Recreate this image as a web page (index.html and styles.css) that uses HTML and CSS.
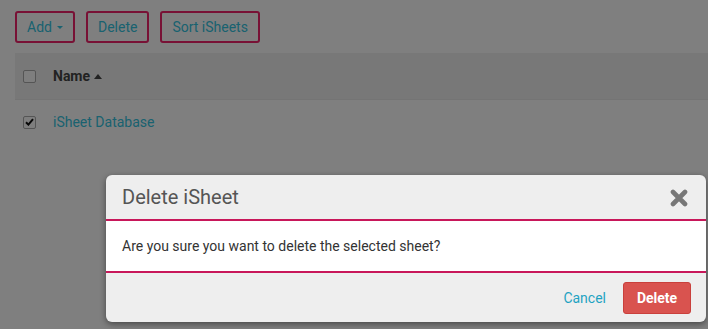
FILE: index.html
```html
<!DOCTYPE html>
<html>
<head>
<meta charset="utf-8">
<link rel="stylesheet" href="styles.css">
</head>
<body>
<div class="page">
  <div class="toolbar">
    <button class="tbtn">Add <span class="caret"></span></button>
    <button class="tbtn">Delete</button>
    <button class="tbtn">Sort iSheets</button>
  </div>
  <div class="table">
    <div class="thead">
      <span class="cb"></span>
      <span class="th">Name <span class="caret-up"></span></span>
    </div>
    <div class="trow">
      <span class="cb checked">
        <svg width="9" height="8" viewBox="0 0 9 8"><path d="M1 4.2 L3.4 6.6 L8 1.2" fill="none" stroke="#111" stroke-width="2"/></svg>
      </span>
      <span class="link">iSheet Database</span>
    </div>
  </div>
</div>
<div class="backdrop"></div>
<div class="modal">
  <div class="m-head">
    <span class="m-title">Delete iSheet</span>
    <svg class="m-close" width="18" height="18" viewBox="0 0 18 18"><path d="M3 3 L15 15 M15 3 L3 15" stroke="#777" stroke-width="4.6" stroke-linecap="round"/></svg>
  </div>
  <div class="m-body">Are you sure you want to delete the selected sheet?</div>
  <div class="m-foot">
    <button class="cancel">Cancel</button>
    <button class="danger">Delete</button>
  </div>
</div>
</body>
</html>
```
FILE: styles.css
```css
html, body {
  margin: 0;
  padding: 0;
  background: #ffffff;
  font-family: Roboto, "Liberation Sans", Arial, sans-serif;
  width: 708px;
  height: 329px;
  overflow: hidden;
}
.page {
  padding: 11px 0 0 15px;
}
.toolbar {
  display: flex;
  gap: 11px;
}
.tbtn {
  height: 32px;
  box-sizing: border-box;
  border: 2px solid #f0226a;
  border-radius: 3px;
  background: #ffffff;
  color: #34c4e0;
  font-family: inherit;
  font-size: 14px;
  padding: 0 10px;
  display: flex;
  align-items: center;
  gap: 5px;
}
.caret {
  width: 0;
  height: 0;
  border-left: 3px solid transparent;
  border-right: 3px solid transparent;
  border-top: 3px solid #34c4e0;
}
.table {
  margin-top: 10px;
}
.thead {
  height: 46px;
  background: #f0f0f0;
  border-bottom: 1px solid #e8e8e8;
  display: flex;
  align-items: center;
  padding-left: 8px;
}
.cb {
  width: 11px;
  height: 11px;
  border: 1px solid #aaa;
  border-radius: 2px;
  background: #fdfdfd;
  display: flex;
  align-items: center;
  justify-content: center;
}
.th {
  margin-left: 17px;
  font-weight: bold;
  font-size: 14px;
  color: #444;
  display: flex;
  align-items: center;
  gap: 4px;
}
.caret-up {
  width: 0;
  height: 0;
  border-left: 4px solid transparent;
  border-right: 4px solid transparent;
  border-bottom: 5px solid #444;
}
.trow {
  height: 44px;
  display: flex;
  align-items: center;
  padding-left: 8px;
}
.link {
  margin-left: 17px;
  font-size: 14px;
  color: #34c4e0;
}
.backdrop {
  position: absolute;
  inset: 0;
  background: rgba(0, 0, 0, 0.5);
}
.modal {
  position: absolute;
  left: 106px;
  top: 175px;
  width: 600px;
  background: #eeeeee;
  border-radius: 6px;
  box-shadow: 0 2px 6px rgba(0, 0, 0, 0.45);
  overflow: hidden;
}
.m-head {
  height: 44px;
  display: flex;
  align-items: center;
  justify-content: space-between;
  padding: 0 18px 0 16px;
}
.m-title {
  font-size: 20px;
  color: #555;
}
.m-close {
  margin-top: 1px;
}
.m-body {
  background: #ffffff;
  border-top: 2px solid #c8175a;
  border-bottom: 2px solid #c8175a;
  height: 50px;
  display: flex;
  align-items: center;
  padding-left: 16px;
  font-size: 14px;
  color: #333;
}
.m-foot {
  height: 49px;
  display: flex;
  align-items: center;
  justify-content: flex-end;
  padding-right: 15px;
  gap: 8px;
}
.cancel {
  background: none;
  border: none;
  font-family: inherit;
  font-size: 14px;
  color: #1ea3c2;
  padding: 0 9px;
}
.danger {
  width: 68px;
  height: 32px;
  background: #d9534f;
  border: 1px solid #c9403c;
  border-radius: 3px;
  color: #fff;
  font-family: inherit;
  font-weight: bold;
  font-size: 14px;
}
```
